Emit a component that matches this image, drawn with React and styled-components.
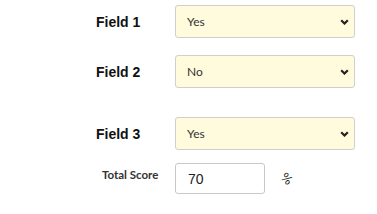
import React from 'react';
import styled, { createGlobalStyle } from 'styled-components';

const Global = createGlobalStyle`
    body {
        margin: 0;
        background: #fff;
        font-family: 'Liberation Sans', Arial, sans-serif;
    }
`;

const Form = styled.div`
    display: flex;
    flex-direction: column;
    padding: 5px 0 0 96px;
`;

const Row = styled.div`
    display: flex;
    align-items: center;
    height: 33px;
    margin-bottom: ${props => props.gap || 17}px;
`;

const Label = styled.div`
    width: 79px;
    font-size: 14px;
    font-weight: bold;
    color: #111;
`;

const SmallLabel = styled.div`
    width: 73px;
    padding-left: 6px;
    margin-top: -9px;
    font-family: Lato, 'Open Sans', sans-serif;
    font-size: 11.5px;
    font-weight: bold;
    color: #333;
`;

const SelectWrap = styled.div`
    position: relative;
    width: 180px;
    height: 33px;
`;

const Select = styled.select`
    appearance: none;
    -webkit-appearance: none;
    box-sizing: border-box;
    width: 100%;
    height: 100%;
    padding: 0 0 0 11px;
    border: 1px solid #cfcfcf;
    border-radius: 3px;
    background: #fffbdc;
    font-family: Lato, 'Open Sans', sans-serif;
    font-size: 12px;
    color: #333;
    outline: none;
`;

const Chevron = styled.svg`
    position: absolute;
    right: 6px;
    top: 14px;
    pointer-events: none;
`;

const ScoreRow = styled.div`
    display: flex;
    align-items: center;
    height: 31px;
    margin-top: -4px;
`;

const Input = styled.input`
    box-sizing: border-box;
    width: 90px;
    height: 31px;
    padding: 0 0 0 12px;
    border: 1px solid #c8c8c8;
    border-radius: 3px;
    font-family: 'Liberation Sans', Arial, sans-serif;
    font-size: 14px;
    color: #222;
    outline: none;
`;

const Unit = styled.span`
    margin-left: 16px;
    font-family: 'DejaVu Sans', sans-serif;
    font-size: 12px;
    color: #222;
    display: inline-block;
    transform: rotate(45deg);
`;

const Arrow = () => (
    <Chevron width="9" height="6" viewBox="0 0 9 6">
        <path d="M1.2 1.2 L4.5 4.5 L7.8 1.2" fill="none" stroke="#222" strokeWidth="2.2" />
    </Chevron>
);

const fields = [
    { name: 'Field 1', value: 'Yes', gap: 17 },
    { name: 'Field 2', value: 'No', gap: 29 },
    { name: 'Field 3', value: 'Yes', gap: 17 },
];

export default function App() {
    return (
        <>
            <Global />
            <Form>
                {fields.map(f => (
                    <Row key={f.name} gap={f.gap}>
                        <Label>{f.name}</Label>
                        <SelectWrap>
                            <Select defaultValue={f.value}>
                                <option>Yes</option>
                                <option>No</option>
                            </Select>
                            <Arrow />
                        </SelectWrap>
                    </Row>
                ))}
                <ScoreRow>
                    <SmallLabel>Total Score</SmallLabel>
                    <Input defaultValue="70" />
                    <Unit>%</Unit>
                </ScoreRow>
            </Form>
        </>
    );
}
